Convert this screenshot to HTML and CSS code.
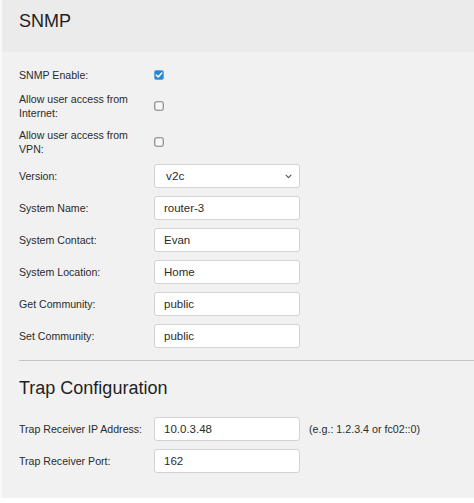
FILE: index.html
```html
<!DOCTYPE html>
<html lang="en">
<head>
<meta charset="utf-8">
<title>SNMP</title>
<link rel="stylesheet" href="styles.css">
</head>
<body>
<div class="page">
  <header class="page-header">
    <h1 class="page-title">SNMP</h1>
  </header>
  <main class="panel">
    <div class="form">
      <div class="row row-check">
        <span class="label">SNMP Enable:</span>
        <span class="control">
          <svg class="checkbox" width="10" height="10" viewBox="0 0 10 10"><rect x="0.5" y="0.5" width="9" height="9" rx="1.8" fill="#2586d3" stroke="#5aa8e6" stroke-width="1"/><path d="M2.3 5.1 L4.2 7 L7.8 3" fill="none" stroke="#ffffff" stroke-width="1.5" stroke-linecap="round" stroke-linejoin="round"/></svg>
        </span>
      </div>
      <div class="row row-check2">
        <span class="label">Allow user access from<br>Internet:</span>
        <span class="control">
          <svg class="checkbox" width="10" height="10" viewBox="0 0 10 10"><rect x="0.75" y="0.75" width="8.5" height="8.5" rx="1.8" fill="#f7f7f7" stroke="#7f7f7f" stroke-width="1.1"/></svg>
        </span>
      </div>
      <div class="row row-check2">
        <span class="label">Allow user access from<br>VPN:</span>
        <span class="control">
          <svg class="checkbox" width="10" height="10" viewBox="0 0 10 10"><rect x="0.75" y="0.75" width="8.5" height="8.5" rx="1.8" fill="#f7f7f7" stroke="#7f7f7f" stroke-width="1.1"/></svg>
        </span>
      </div>
      <div class="row">
        <span class="label">Version:</span>
        <div class="field select">
          <span class="select-value">v2c</span>
          <svg class="chevron" width="7" height="5" viewBox="0 0 7 5"><path d="M1 1.2 L3.5 3.7 L6 1.2" fill="none" stroke="#555" stroke-width="1.1" stroke-linecap="round" stroke-linejoin="round"/></svg>
        </div>
      </div>
      <div class="row">
        <span class="label">System Name:</span>
        <input class="field" type="text" value="router-3">
      </div>
      <div class="row">
        <span class="label">System Contact:</span>
        <input class="field" type="text" value="Evan">
      </div>
      <div class="row">
        <span class="label">System Location:</span>
        <input class="field" type="text" value="Home">
      </div>
      <div class="row">
        <span class="label">Get Community:</span>
        <input class="field" type="text" value="public">
      </div>
      <div class="row">
        <span class="label">Set Community:</span>
        <input class="field" type="text" value="public">
      </div>
    </div>
    <div class="divider"></div>
    <h2 class="section-title">Trap Configuration</h2>
    <div class="form form-trap">
      <div class="row">
        <span class="label">Trap Receiver IP Address:</span>
        <input class="field" type="text" value="10.0.3.48">
        <span class="hint">(e.g.: 1.2.3.4 or fc02::0)</span>
      </div>
      <div class="row">
        <span class="label">Trap Receiver Port:</span>
        <input class="field" type="text" value="162">
      </div>
    </div>
  </main>
</div>
</body>
</html>
```
FILE: styles.css
```css
html, body {
  margin: 0;
  padding: 0;
  background: #ffffff;
}

body {
  font-family: "Liberation Sans", Arial, Helvetica, sans-serif;
  color: #2b2b2b;
}

.page {
  border-left: 2px solid #f8f8f9;
}

.page-header {
  height: 52px;
  box-sizing: border-box;
  background: #ebebec;
  padding: 11px 0 0 17px;
}

.page-title {
  margin: 0;
  font-size: 18px;
  line-height: 20px;
  font-weight: normal;
  color: #1f1f1f;
}

.panel {
  background: #f1f1f2;
  padding: 0 0 25px 17px;
}

.form {
  display: flex;
  flex-direction: column;
  gap: 8px;
  padding-top: 14px;
}

.form-trap {
  padding-top: 19px;
}

.row {
  display: grid;
  grid-template-columns: 135px 146px auto;
  align-items: center;
  min-height: 24px;
}

.row-check {
  min-height: 18px;
}

.row-check2 {
  min-height: 28px;
}

.label {
  font-size: 10.6px;
  line-height: 14px;
  color: #2b2b2b;
}

.control {
  display: flex;
  align-items: center;
}

.checkbox {
  display: block;
}

.field {
  box-sizing: border-box;
  width: 146px;
  height: 24px;
  margin: 0;
  background: #ffffff;
  border: 1px solid #d3d3d5;
  border-radius: 3px;
  padding: 0 0 0 9px;
  font-family: "Liberation Sans", Arial, Helvetica, sans-serif;
  font-size: 11.5px;
  color: #2b2b2b;
  outline: none;
}

.select {
  display: flex;
  align-items: center;
  justify-content: space-between;
  padding: 0 7px 0 11px;
}

.select-value {
  font-size: 11.8px;
}

.chevron {
  display: block;
}

.hint {
  margin-left: 9px;
  font-size: 10.7px;
  color: #2b2b2b;
  white-space: nowrap;
}

.divider {
  margin-top: 12px;
  height: 1px;
  background: #c4c4c6;
}

.section-title {
  margin: 17px 0 0 0;
  font-size: 18px;
  line-height: 20px;
  font-weight: normal;
  color: #1f1f1f;
}
```
